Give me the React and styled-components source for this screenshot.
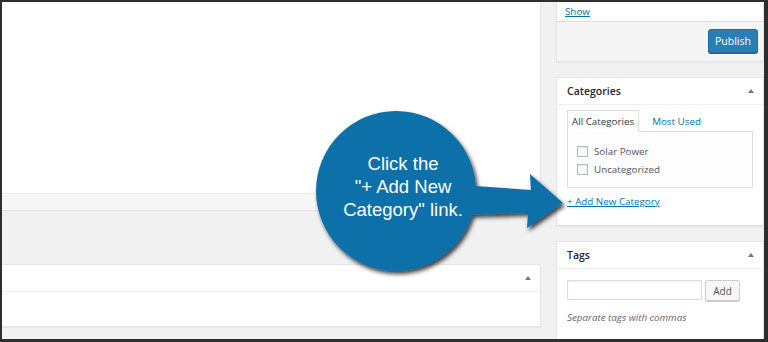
import React from 'react';
import styled, { createGlobalStyle } from 'styled-components';

const GlobalStyle = createGlobalStyle`
  html, body {
    margin: 0;
    padding: 0;
    background: #2b2b2b;
  }
  body {
    font-family: "Open Sans", "Noto Sans", Arial, sans-serif;
    color: #444;
  }
`;

const Frame = styled.div`
  position: relative;
  box-sizing: border-box;
  width: 768px;
  height: 342px;
  border-style: solid;
  border-color: #2e2e2e;
  border-width: 2px 4px 3px 2px;
  background: #f1f1f1;
  display: flex;
  gap: 15px;
  overflow: hidden;
`;

const MainColumn = styled.div`
  width: 539px;
  display: flex;
  flex-direction: column;
`;

const Editor = styled.div`
  box-sizing: border-box;
  height: 191px;
  background: #fff;
  border-right: 1px solid #e5e5e5;
`;

const StatusBar = styled.div`
  box-sizing: border-box;
  height: 18px;
  background: #f7f7f7;
  border-top: 1px solid #ececec;
  border-bottom: 1px solid #e3e3e3;
  border-right: 1px solid #e5e5e5;
`;

const SideColumn = styled.div`
  width: 208px;
  display: flex;
  flex-direction: column;
`;

const Postbox = styled.section`
  box-sizing: border-box;
  background: #fff;
  border: 1px solid #e5e5e5;
  border-left-width: ${p => (p.$flushLeft ? 0 : 1)}px;
  border-top-width: ${p => (p.$flushTop ? 0 : 1)}px;
  box-shadow: 0 1px 1px rgba(0, 0, 0, 0.04);
  margin-top: ${p => p.$top || 0}px;
  height: ${p => (p.$height ? `${p.$height}px` : 'auto')};
  flex-shrink: 0;
`;

const BoxHeader = styled.div`
  box-sizing: border-box;
  height: 27px;
  display: flex;
  align-items: center;
  justify-content: space-between;
  padding: 0 9px 0 10px;
  border-bottom: 1px solid #eee;
`;

const BoxTitle = styled.h2`
  margin: 0;
  font-size: 10.5px;
  font-weight: 600;
  color: #23282d;
`;

const Toggle = styled.span`
  width: 0;
  height: 0;
  border-left: 3px solid transparent;
  border-right: 3px solid transparent;
  border-bottom: 4px solid #72777c;
`;

const MiscRow = styled.div`
  box-sizing: border-box;
  height: 19px;
  padding: 0 8px;
  display: flex;
  align-items: center;
`;

const Link = styled.a`
  color: #0073aa;
  font-size: 9.8px;
  text-decoration: underline;
  cursor: pointer;
`;

const PublishFooter = styled.div`
  box-sizing: border-box;
  height: 40px;
  background: #f5f5f5;
  border-top: 1px solid #ddd;
  display: flex;
  justify-content: flex-end;
  align-items: flex-start;
  padding: 7px 5px 0 0;
`;

const PrimaryButton = styled.button`
  box-sizing: border-box;
  height: 24px;
  width: 50px;
  padding: 0;
  background: #2b7db6;
  border: 1px solid #1f6a9e;
  border-radius: 3px;
  box-shadow: 0 1px 0 #1e6596;
  color: #fff;
  font-family: inherit;
  font-size: 10.5px;
`;

const BoxBody = styled.div`
  padding: ${p => p.$pad || '5px 10px 10px'};
`;

const Tabs = styled.div`
  display: flex;
  align-items: flex-end;
  gap: 8px;
  height: 21px;
`;

const Tab = styled.span`
  box-sizing: border-box;
  height: 22px;
  display: flex;
  align-items: center;
  padding: 0 4px;
  font-size: 9.8px;
  color: ${p => (p.$active ? '#32373c' : '#0073aa')};
  background: ${p => (p.$active ? '#fff' : 'transparent')};
  border: 1px solid ${p => (p.$active ? '#ddd' : 'transparent')};
  border-bottom: none;
  margin-bottom: -1px;
  position: relative;
  z-index: 1;
`;

const TabPanel = styled.div`
  box-sizing: border-box;
  height: 57px;
  border: 1px solid #ddd;
  background: #fdfdfd;
  padding: 14px 9px 0;
  display: flex;
  flex-direction: column;
  gap: 7px;
`;

const CheckRow = styled.label`
  display: flex;
  align-items: center;
  gap: 6px;
  font-size: 9.8px;
  color: #50555a;
  height: 11px;
`;

const Checkbox = styled.span`
  box-sizing: border-box;
  width: 11px;
  height: 11px;
  border: 1px solid #b4b9be;
  background: #fff;
  box-shadow: inset 0 1px 2px rgba(0, 0, 0, 0.1);
`;

const AddLink = styled(Link)`
  display: block;
  margin-top: 8px;
  line-height: 12px;
`;

const TagRow = styled.div`
  display: flex;
  gap: 3px;
`;

const TagInput = styled.input`
  box-sizing: border-box;
  width: 135px;
  height: 20px;
  border: 1px solid #ddd;
  box-shadow: inset 0 1px 2px rgba(0, 0, 0, 0.07);
  padding: 0 4px;
  outline: none;
`;

const SecondaryButton = styled.button`
  box-sizing: border-box;
  width: 35px;
  height: 21px;
  padding: 0;
  background: #f7f7f7;
  border: 1px solid #ccc;
  border-radius: 3px;
  box-shadow: 0 1px 0 #ccc;
  color: #555;
  font-family: inherit;
  font-size: 10px;
`;

const Hint = styled.p`
  margin: 10px 0 0;
  font-size: 9.8px;
  font-style: italic;
  color: #666;
`;

const Callout = styled.svg`
  position: absolute;
  left: 298px;
  top: 98px;
  overflow: visible;
  pointer-events: none;
`;

const CalloutText = styled.text`
  font-family: "Liberation Sans", Arial, sans-serif;
  font-size: 18.5px;
  fill: #fff;
`;

const lines = ['Click the', '"+ Add New', 'Category" link.'];

export default function App() {
  return (
    <>
      <GlobalStyle />
      <Frame>
        <MainColumn>
          <Editor />
          <StatusBar />
          <Postbox $flushLeft $top={53} $height={63}>
            <BoxHeader>
              <span />
              <Toggle />
            </BoxHeader>
          </Postbox>
        </MainColumn>

        <SideColumn>
          <Postbox $flushTop>
            <MiscRow>
              <Link>Show</Link>
            </MiscRow>
            <PublishFooter>
              <PrimaryButton>Publish</PrimaryButton>
            </PublishFooter>
          </Postbox>

          <Postbox $top={15} $height={149}>
            <BoxHeader>
              <BoxTitle>Categories</BoxTitle>
              <Toggle />
            </BoxHeader>
            <BoxBody>
              <Tabs>
                <Tab $active>All Categories</Tab>
                <Tab>Most Used</Tab>
              </Tabs>
              <TabPanel>
                <CheckRow>
                  <Checkbox />
                  Solar Power
                </CheckRow>
                <CheckRow>
                  <Checkbox />
                  Uncategorized
                </CheckRow>
              </TabPanel>
              <AddLink>+ Add New Category</AddLink>
            </BoxBody>
          </Postbox>

          <Postbox $top={15} $height={110}>
            <BoxHeader>
              <BoxTitle>Tags</BoxTitle>
              <Toggle />
            </BoxHeader>
            <BoxBody $pad="11px 10px 0">
              <TagRow>
                <TagInput />
                <SecondaryButton>Add</SecondaryButton>
              </TagRow>
              <Hint>Separate tags with commas</Hint>
            </BoxBody>
          </Postbox>
        </SideColumn>

        <Callout width="280" height="180" viewBox="0 0 280 180">
          <defs>
            <filter id="calloutShadow" x="-20%" y="-20%" width="150%" height="150%">
              <feDropShadow dx="2" dy="3" stdDeviation="2" floodColor="#000" floodOpacity="0.75" />
            </filter>
          </defs>
          <g filter="url(#calloutShadow)" fill="#0f6fa8">
            <circle cx="96" cy="91" r="80" />
            <polygon points="160,85 231,90 230,74 263,103 227,128 228,113 160,115" />
          </g>
          <CalloutText textAnchor="middle">
            {lines.map((t, i) => (
              <tspan key={t} x="103" y={70 + i * 23}>
                {t}
              </tspan>
            ))}
          </CalloutText>
        </Callout>
      </Frame>
    </>
  );
}
